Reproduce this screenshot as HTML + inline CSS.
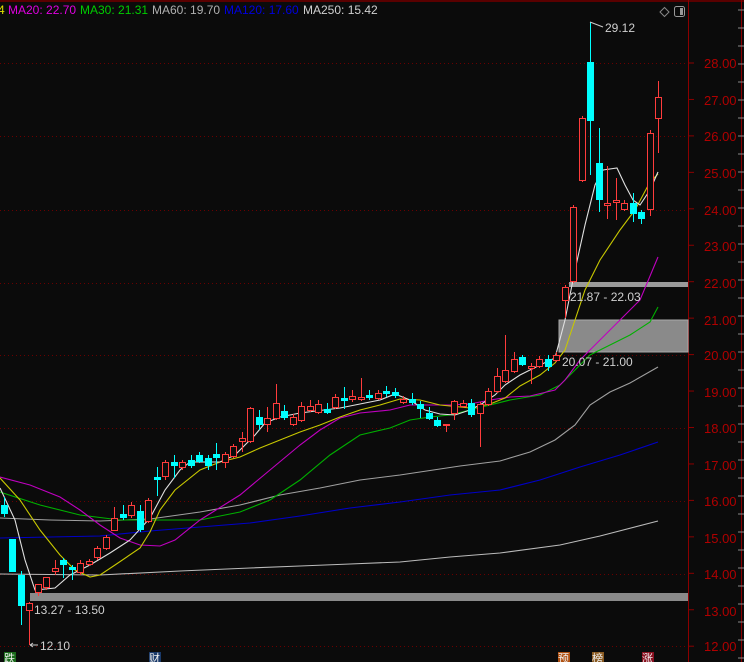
<!DOCTYPE html>
<html><head><meta charset="utf-8"><style>
html,body{margin:0;padding:0;background:#0b0b0b;width:744px;height:662px;overflow:hidden}
svg{display:block}
text{font-family:"Liberation Sans","Noto Sans CJK SC",sans-serif}
</style></head><body>
<svg id="s" width="744" height="662" viewBox="0 0 744 662" xmlns="http://www.w3.org/2000/svg">
<rect width="744" height="662" fill="#0b0b0b"/>
<rect x="0" y="0" width="744" height="2" fill="#5a0000"/>
<g id="grid" stroke="#6a0000" stroke-dasharray="1,3" stroke-width="1"></g>
<line x1="688.5" y1="0" x2="688.5" y2="662" stroke="#8b0000"/>
<line x1="741.5" y1="0" x2="741.5" y2="662" stroke="#8b0000"/>
<g id="ticks" stroke="#8b0000"></g>
<g font-size="13" fill="#b00000">
<text x="704" y="68">28.00</text><text x="704" y="105">27.00</text><text x="704" y="141">26.00</text>
<text x="704" y="178">25.00</text><text x="704" y="215">24.00</text><text x="704" y="251">23.00</text>
<text x="704" y="288">22.00</text><text x="704" y="325">21.00</text><text x="704" y="360">20.00</text>
<text x="704" y="397">19.00</text><text x="704" y="433">18.00</text><text x="704" y="470">17.00</text>
<text x="704" y="506">16.00</text><text x="704" y="543">15.00</text><text x="704" y="579">14.00</text>
<text x="704" y="616">13.00</text><text x="704" y="651">12.00</text>
</g>
<rect x="30" y="593" width="658" height="8" fill="#8a8a8a"/>
<rect x="569" y="282" width="119" height="5" fill="#9a9a9a"/>
<rect x="559" y="320" width="129" height="32" fill="#8a8a8a" stroke="#aaa"/>
<g id="ma" fill="none" stroke-width="1.1"></g>
<g id="cand"></g>
<g font-size="12" fill="#d0d0d0">
<text x="34" y="614">13.27 - 13.50</text>
<text x="40" y="650">12.10</text>
<text x="570" y="301">21.87 - 22.03</text>
<text x="562" y="366">20.07 - 21.00</text>
<text x="605" y="32">29.12</text>
</g>
<path d="M38 645 H30 M30 645 l3 -2 M30 645 l3 2" stroke="#ccc" fill="none"/>
<path d="M590 22 L603 27" stroke="#ccc" fill="none"/>
<g font-size="12">
<text x="-2" y="14" fill="#e0e000">4</text>
<text x="8" y="14" fill="#e000e0">MA20: 22.70</text>
<text x="80" y="14" fill="#00cc00">MA30: 21.31</text>
<text x="152" y="14" fill="#b0b0b0">MA60: 19.70</text>
<text x="224" y="14" fill="#0000e0">MA120: 17.60</text>
<text x="303" y="14" fill="#d0d0d0">MA250: 15.42</text>
</g>
<path d="M660 12 L664.5 7.5 L669 12 L664.5 16.5 Z" fill="none" stroke="#888"/>
<rect x="674.5" y="6.5" width="10" height="10" rx="2" fill="none" stroke="#999"/>
<rect x="680" y="8" width="3" height="7" fill="#999"/>
<g font-size="11">
<rect x="4" y="652" width="12" height="10" fill="#1a6a1a"/><text x="4" y="662" fill="#eee">跌</text>
<rect x="149" y="652" width="12" height="10" fill="#1a3a6a"/><text x="149" y="662" fill="#eee">财</text>
<rect x="558" y="652" width="12" height="10" fill="#b05010"/><text x="558" y="662" fill="#eee">预</text>
<rect x="592" y="652" width="12" height="10" fill="#8a5a20"/><text x="592" y="662" fill="#eee">榜</text>
<rect x="642" y="652" width="12" height="10" fill="#8a1020"/><text x="642" y="662" fill="#eee">涨</text>
</g>
</svg>
<script>
var NS="http://www.w3.org/2000/svg";
function el(p,t,a){var e=document.createElementNS(NS,t);for(var k in a)e.setAttribute(k,a[k]);p.appendChild(e);return e;}
var g=document.getElementById('grid');
[63,136,210,283,355,428,501,574,646].forEach(function(y){el(g,'line',{x1:0,y1:y+.5,x2:688,y2:y+.5});});
var tk=document.getElementById('ticks');
for(var p=12;p<=28;p++){var y=63+(28-p)*36.45;el(tk,'line',{x1:688,y1:y,x2:694,y2:y});}
for(var y=10;y<662;y+=18){el(tk,'line',{x1:738,y1:y,x2:744,y2:y,stroke:'#888'});}
var mas=[
['#a0a0a0',[[0,518],[50,520],[100,521],[150,519],[200,512],[240,505],[280,495],[320,488],[360,480],[400,475],[460,466],[500,461],[530,452],[555,440],[575,425],[590,405],[610,392],[630,383],[658,367]]],
['#0000c8',[[0,538],[100,536],[150,531],[200,527],[250,523],[300,516],[350,508],[400,502],[450,495],[500,490],[540,480],[580,467],[620,455],[658,442]]],
['#bbbbbb',[[0,574],[100,575],[180,571],[250,568],[300,566],[350,564],[400,562],[450,557],[500,553],[560,545],[600,536],[658,521]]],
['#00b000',[[0,492],[40,505],[80,515],[120,520],[170,520],[200,520],[240,512],[270,500],[300,480],[330,455],[360,435],[390,428],[410,420],[430,417],[450,415],[470,410],[490,405],[510,400],[540,395],[560,385],[575,370],[590,355],[610,345],[630,335],[650,322],[658,307]]],
['#c000c0',[[0,477],[30,485],[60,497],[80,510],[100,525],[120,538],[140,545],[160,546],[175,540],[200,520],[240,495],[270,470],[300,445],[320,430],[340,418],[360,413],[390,410],[410,405],[450,405],[470,404],[490,400],[510,397],[530,396],[555,390],[565,380],[580,360],[600,340],[620,320],[640,300],[658,257]]],
['#c8c800',[[0,478],[20,500],[40,530],[60,555],[75,570],[90,577],[100,575],[115,565],[140,548],[150,532],[160,510],[175,490],[200,470],[220,462],[240,457],[260,448],[280,440],[300,432],[320,425],[340,417],[360,410],[380,405],[400,399],[420,400],[440,405],[470,408],[490,404],[505,398],[520,386],[540,375],[555,363],[565,350],[575,320],[585,290],[600,260],[620,230],[635,210],[650,182],[658,174]]],
['#e0e0e0',[[0,488],[15,520],[25,560],[35,590],[55,588],[70,575],[90,565],[110,553],[130,540],[150,518],[165,490],[180,470],[190,462],[220,462],[235,455],[245,445],[255,435],[265,423],[280,417],[300,413],[340,408],[380,400],[395,394],[410,400],[425,410],[440,414],[455,415],[470,410],[480,405],[495,395],[505,385],[520,375],[540,365],[555,358],[565,320],[575,270],[585,225],[595,185],[603,170],[617,168],[625,185],[633,200],[640,205],[650,190],[658,172]]]
];
var mg=document.getElementById('ma');
mas.forEach(function(m){el(mg,'polyline',{points:m[1].map(function(p){return p.join(',')}).join(' '),stroke:m[0]});});
var D=[
[505,513,497,517,'c'],[539,571,539,571,'c'],[575,605,571,625,'c'],[603,610,602,645,'r'],[584,592,584,596,'r'],[577,587,577,590,'r'],[568,571,560,575,'r'],[560,564,558,578,'c'],[567,569,565,580,'c'],[563,572,560,575,'r'],[561,564,559,566,'r'],[548,557,546,560,'r'],[537,548,535,550,'r'],[518,530,507,531,'r'],[514,517,505,520,'c'],[505,515,502,518,'r'],[511,529,505,532,'c'],[500,521,498,523,'r'],[477,479,467,496,'c'],[462,476,460,480,'r'],
[462,465,455,478,'c'],[462,467,460,470,'r'],[460,465,455,468,'c'],[455,461,452,463,'c'],[458,465,455,470,'c'],[454,457,443,470,'c'],[454,462,452,468,'r'],[446,456,444,458,'r'],[438,441,432,452,'r'],[408,441,407,443,'r'],[417,424,410,430,'c'],[418,424,407,432,'r'],[403,418,384,420,'r'],[411,417,405,420,'c'],[417,424,414,426,'r'],[406,420,402,422,'r'],[406,410,400,412,'r'],[404,412,400,414,'r'],[409,412,403,414,'c'],[397,407,394,409,'r'],[398,400,387,409,'c'],[396,399,390,402,'r'],[397,399,378,401,'r'],[395,397,390,400,'c'],[393,398,390,400,'r'],[391,393,386,397,'c'],[392,395,388,398,'c'],
[399,402,396,404,'r'],[399,402,393,405,'c'],[404,408,401,418,'c'],[413,418,407,420,'c'],[420,425,417,427,'c'],[424,425,424,432,'r'],[401,413,400,420,'r'],[403,406,400,408,'r'],[403,414,399,417,'c'],[404,413,402,447,'r'],[391,404,388,406,'r'],[376,391,368,393,'r'],[370,381,335,383,'r'],[359,371,352,373,'r'],[357,364,355,366,'c'],[366,368,363,384,'r'],[359,366,356,368,'r'],[359,366,355,371,'c'],[355,360,352,362,'r'],
[287,300,285,318,'r'],[207,281,205,283,'r'],[118,180,116,182,'r'],[62,120,22,175,'c'],[163,199,128,212,'c'],[203,205,166,219,'r'],[200,202,178,220,'r'],[203,209,200,211,'r'],[203,213,193,222,'c'],[212,218,210,224,'c'],[133,209,130,216,'r'],[97,118,81,153,'r']
];
var cg=document.getElementById('cand');
D.forEach(function(d,i){
 var x=Math.round(4+i*8.494);var col=d[4]=='r'?'#ff3c3c':'#00ffff';
 el(cg,'line',{x1:x+.5,y1:d[2],x2:x+.5,y2:d[3],stroke:col});
 var h=Math.max(1,d[1]-d[0]);
 if(d[4]=='r') el(cg,'rect',{x:x-3+.5,y:d[0]+.5,width:6,height:h,fill:'#0b0b0b',stroke:col});
 else el(cg,'rect',{x:x-3,y:d[0],width:7,height:h+1,fill:col});
});
</script>
</body></html>
